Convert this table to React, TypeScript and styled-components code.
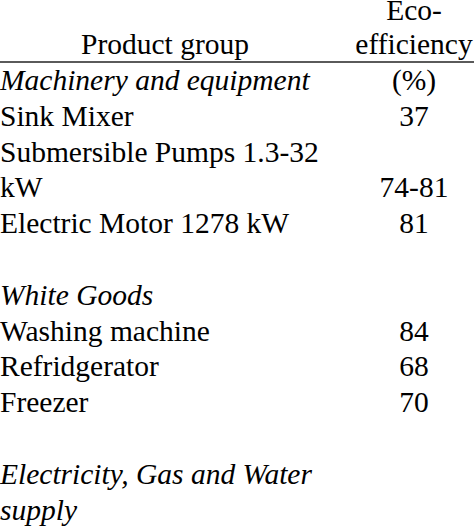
import React from 'react';
import styled, { createGlobalStyle } from 'styled-components';

const GlobalStyle = createGlobalStyle`
    html, body {
        margin: 0;
        padding: 0;
        background: #ffffff;
        overflow: hidden;
    }
`;

const Page = styled.div`
    width: 474px;
    height: 527px;
    overflow: hidden;
    font-family: "Liberation Serif", "Times New Roman", serif;
    font-size: 29.5px;
    color: #000000;
`;

const Header = styled.div`
    display: grid;
    grid-template-columns: 354px 120px;
    align-items: end;
    line-height: 33px;
    border-bottom: 2px solid #5a5a5a;
`;

const HeadCell = styled.div<{ $offset?: number }>`
    text-align: center;
    padding-right: ${(p) => p.$offset ?? 0}px;
`;

// first header line sits tight against the top edge, like in the scan
const HeadTop = styled.div`
    line-height: 20px;
    margin-bottom: 8px;
`;

const Row = styled.div`
    display: grid;
    grid-template-columns: 354px 120px;
    line-height: 35.8px;
`;

const Label = styled.div<{ $italic?: boolean }>`
    font-style: ${(p) => (p.$italic ? 'italic' : 'normal')};
`;

const Value = styled.div`
    text-align: center;
    align-self: end;
`;

type Item = { label: string; value?: string; italic?: boolean };

const rows: Item[] = [
    { label: 'Machinery and equipment', value: '(%)', italic: true },
    { label: 'Sink Mixer', value: '37' },
    { label: 'Submersible Pumps 1.3-32 kW', value: '74-81' },
    { label: 'Electric Motor 1278 kW', value: '81' },
    { label: '' },
    { label: 'White Goods', italic: true },
    { label: 'Washing machine', value: '84' },
    { label: 'Refridgerator', value: '68' },
    { label: 'Freezer', value: '70' },
    { label: '' },
    { label: 'Electricity, Gas and Water supply', italic: true },
];

const App: React.FC = () => {
    return (
        <>
            <GlobalStyle />
            <Page>
                <Header>
                    <HeadCell $offset={24}>Product group</HeadCell>
                    <HeadCell>
                        <HeadTop>Eco-</HeadTop>
                        efficiency
                    </HeadCell>
                </Header>
                {rows.map((row, i) => (
                    <Row key={i}>
                        <Label $italic={row.italic}>{row.label || '\u00a0'}</Label>
                        <Value>{row.value ?? ''}</Value>
                    </Row>
                ))}
            </Page>
        </>
    );
};

export default App;
